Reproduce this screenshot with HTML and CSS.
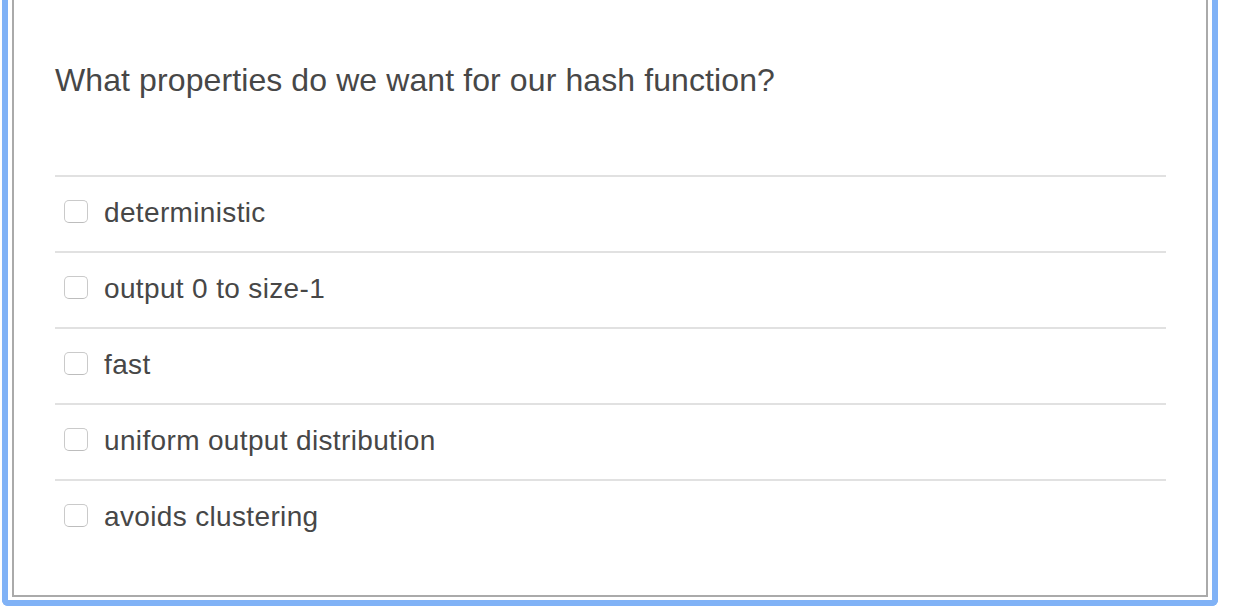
FILE: index.html
```html
<!DOCTYPE html>
<html>
<head>
<meta charset="utf-8">
<link rel="stylesheet" href="styles.css">
</head>
<body>
<div class="frame">
  <div class="panel">
    <div class="question">What properties do we want for our hash function?</div>
    <ul class="options">
      <li class="option"><input type="checkbox" class="box"><span class="label">deterministic</span></li>
      <li class="option"><input type="checkbox" class="box"><span class="label">output 0 to size-1</span></li>
      <li class="option"><input type="checkbox" class="box"><span class="label">fast</span></li>
      <li class="option"><input type="checkbox" class="box"><span class="label">uniform output distribution</span></li>
      <li class="option"><input type="checkbox" class="box"><span class="label">avoids clustering</span></li>
    </ul>
  </div>
</div>
</body>
</html>
```
FILE: styles.css
```css
html, body {
  margin: 0;
  padding: 0;
  background: #ffffff;
}
body {
  font-family: "Liberation Sans", Arial, sans-serif;
  color: #474747;
  overflow: hidden;
}
.frame {
  box-sizing: border-box;
  margin-left: 2px;
  width: 1216px;
  height: 606px;
  border: 6px solid #80b2f6;
  border-top: 0;
  border-radius: 0 0 6px 6px;
  padding: 0 4px 3px 4px;
  background: #ffffff;
}
.panel {
  box-sizing: border-box;
  height: 100%;
  border: 2px solid #aaaaaa;
  border-top: 0;
  padding: 0 40px 0 41px;
}
.question {
  padding-top: 62px;
  height: 113px;
  font-size: 32px;
  line-height: 36px;
  letter-spacing: 0.1px;
  color: #474747;
}
.options {
  list-style: none;
  margin: 0;
  padding: 0;
}
.option {
  box-sizing: border-box;
  height: 76px;
  border-top: 2px solid #e1e1e1;
  display: flex;
  align-items: center;
  padding-bottom: 3px;
}
.box {
  appearance: none;
  -webkit-appearance: none;
  margin: 0 0 2px 9px;
  width: 24px;
  height: 23px;
  box-sizing: border-box;
  border: 1px solid #cacaca;
  border-bottom-color: #bdbdbd;
  border-radius: 5px;
  background: #fff;
  flex: none;
}
.label {
  margin-left: 16px;
  font-size: 28px;
  line-height: 30px;
  letter-spacing: 0.35px;
  color: #474747;
}
```
